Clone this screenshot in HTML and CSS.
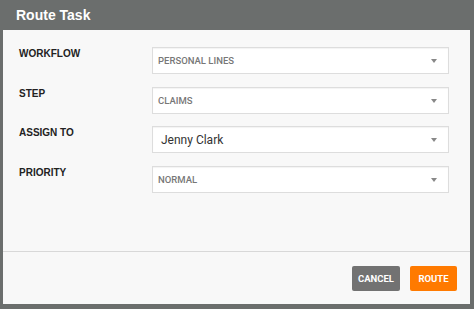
FILE: index.html
```html
<!DOCTYPE html>
<html lang="en">
<head>
    <meta charset="UTF-8">
    <meta name="viewport" content="width=device-width, initial-scale=1.0">
    <title>Route Task</title>
    <link rel="stylesheet" href="styles.css">
</head>
<body>
    <div class="dialog">
        <div class="dialog-title">Route Task</div>
        <div class="panel">
            <div class="form">
                <div class="row">
                    <label>WORKFLOW</label>
                    <div class="select small">PERSONAL LINES<span class="caret"></span></div>
                </div>
                <div class="row">
                    <label>STEP</label>
                    <div class="select small">CLAIMS<span class="caret"></span></div>
                </div>
                <div class="row">
                    <label>ASSIGN TO</label>
                    <div class="select big">Jenny Clark<span class="caret"></span></div>
                </div>
                <div class="row">
                    <label>PRIORITY</label>
                    <div class="select small">NORMAL<span class="caret"></span></div>
                </div>
            </div>
            <div class="footer">
                <button class="btn cancel">CANCEL</button>
                <button class="btn route">ROUTE</button>
            </div>
        </div>
    </div>
</body>
</html>
```

FILE: styles.css
```css
body {
    margin: 0;
    background-color: #6b6e6d;
    font-family: "Liberation Sans", Arial, sans-serif;
}
.dialog {
    width: 474px;
    height: 309px;
    display: flex;
    flex-direction: column;
}
.dialog-title {
    height: 30px;
    line-height: 30px;
    padding-left: 16px;
    color: #fff;
    font-size: 14px;
    font-weight: bold;
}
.panel {
    margin: 0 4px 5px 3px;
    height: 274px;
    background-color: #f8f8f8;
    display: flex;
    flex-direction: column;
}
.form {
    height: 222px;
    box-sizing: border-box;
    padding: 17px 21px 0 16px;
    border-bottom: 1px solid #d8d8d8;
    display: flex;
    flex-direction: column;
    gap: 12.7px;
}
.row {
    display: flex;
    align-items: flex-start;
}
.row label {
    width: 133px;
    margin-top: 1px;
    font-size: 10px;
    font-weight: bold;
    color: #222;
}
.select {
    position: relative;
    flex: 1;
    height: 27px;
    box-sizing: border-box;
    background-color: #fff;
    border: 1px solid #ddd;
    box-shadow: inset 0 1px 1px rgba(0, 0, 0, 0.05);
    display: flex;
    align-items: center;
    font-family: Roboto, "Liberation Sans", sans-serif;
}
.select.small {
    padding-left: 5px;
    font-size: 9.5px;
    font-weight: 500;
    color: #777;
}
.select.big {
    padding-left: 8px;
    font-size: 12px;
    color: #333;
}
.caret {
    position: absolute;
    right: 11px;
    top: 11px;
    width: 0;
    height: 0;
    border-left: 3px solid transparent;
    border-right: 3px solid transparent;
    border-top: 4px solid #888;
}
.footer {
    flex: 1;
    display: flex;
    justify-content: flex-end;
    align-items: flex-start;
    gap: 10px;
    padding: 14px 13px 0 0;
}
.btn {
    height: 25px;
    border: none;
    border-radius: 2px;
    color: #fff;
    font-family: Roboto, "Liberation Sans", sans-serif;
    font-size: 9.5px;
    font-weight: bold;
    cursor: pointer;
}
.cancel {
    width: 48px;
    background-color: #727272;
}
.route {
    width: 47px;
    background-color: #ff7a00;
}
```
